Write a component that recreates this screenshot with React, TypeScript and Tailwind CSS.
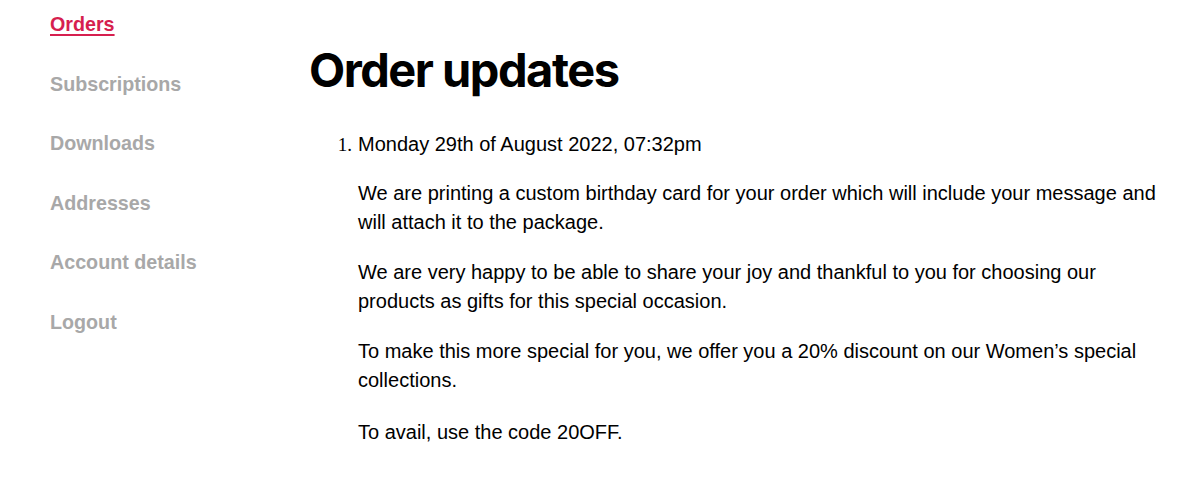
import React from 'react';

const navItems = ['Orders', 'Subscriptions', 'Downloads', 'Addresses', 'Account details', 'Logout'];

const paragraphs = [
  'We are printing a custom birthday card for your order which will include your message and will attach it to the package.',
  'We are very happy to be able to share your joy and thankful to you for choosing our products as gifts for this special occasion.',
  'To make this more special for you, we offer you a 20% discount on our Women\u2019s special collections.',
  'To avail, use the code 20OFF.',
];

export default function App() {
  return (
    <div className="flex w-[1196px] h-[500px] bg-white font-['Liberation_Sans',Arial,sans-serif] text-black">
      {/* Account nav */}
      <nav className="w-[310px] shrink-0 pl-[50px] pt-[12px]">
        <ul className="flex flex-col gap-[35.6px]">
          {navItems.map((item, i) => (
            <li key={item} className="h-[24px] leading-[24px]">
              <a
                href="#"
                className={
                  i === 0
                    ? 'text-[19.7px] font-bold text-[#d61f4f] underline underline-offset-[3px] decoration-2'
                    : 'text-[19.7px] font-bold text-[#a8a8a8]'
                }
              >
                {item}
              </a>
            </li>
          ))}
        </ul>
      </nav>

      {/* Content */}
      <main className="flex-1 pt-[42px] pr-[36px]">
        <h1 className="-ml-[1px] font-['Inter',sans-serif] text-[47px] font-bold leading-[56px] tracking-[-1.5px]">
          Order updates
        </h1>
        <ol className="mt-[32px]">
          <li className="flex">
            <span className="w-[44px] pr-[2px] text-right font-['Liberation_Serif',serif] text-[19px] leading-[29px]">1.</span>
            <div className="flex-1 pl-[4px] text-[20px] leading-[29px]">
              <p>Monday 29th of August 2022, 07:32pm</p>
              <p className="mt-[20px]">{paragraphs[0]}</p>
              {paragraphs.slice(1).map((p, i) => (
                <p key={p} className={i === 2 ? 'mt-[23px]' : 'mt-[21px]'}>{p}</p>
              ))}
            </div>
          </li>
        </ol>
      </main>
    </div>
  );
}
